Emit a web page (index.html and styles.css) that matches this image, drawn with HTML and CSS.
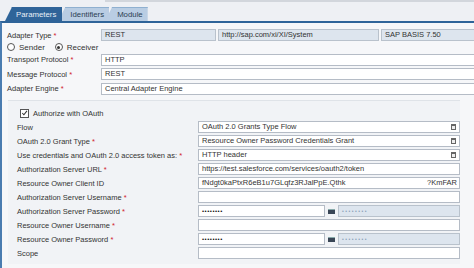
FILE: index.html
```html
<!DOCTYPE html>
<html>
<head>
<meta charset="utf-8">
<link rel="stylesheet" href="styles.css">
</head>
<body>
<div class="top"><div class="top-strip"></div></div>
<div class="tabs">
  <div class="tab active">Parameters</div>
  <div class="tab">Identifiers</div>
  <div class="tab">Module</div>
</div>
<div class="panel">
  <div class="row r1">
    <div class="label">Adapter Type <span class="req">*</span></div>
    <div class="fields3">
      <div class="field ro">REST</div>
      <div class="field ro">http://sap.com/xi/XI/System</div>
      <div class="field ro">SAP BASIS 7.50</div>
    </div>
  </div>
  <div class="radios">
    <span class="radio"></span><span class="rlabel">Sender</span>
    <span class="radio on"></span><span class="rlabel">Receiver</span>
  </div>
  <div class="row">
    <div class="label">Transport Protocol <span class="req">*</span></div>
    <div class="field wide">HTTP</div>
  </div>
  <div class="row">
    <div class="label">Message Protocol <span class="req">*</span></div>
    <div class="field wide">REST</div>
  </div>
  <div class="row">
    <div class="label">Adapter Engine <span class="req">*</span></div>
    <div class="field wide">Central Adapter Engine</div>
  </div>
  <div class="group">
    <div class="check-row"><span class="check"><svg width="8" height="8" viewBox="0 0 8 8"><path d="M1.5 4 L3.3 6 L6.8 1.6" fill="none" stroke="#333" stroke-width="1.2"/></svg></span><span>Authorize with OAuth</span></div>
    <div class="grow"><div class="glabel">Flow</div><div class="field sel">OAuth 2.0 Grants Type Flow<span class="dd"></span></div></div>
    <div class="grow"><div class="glabel">OAuth 2.0 Grant Type <span class="req">*</span></div><div class="field sel">Resource Owner Password Credentials Grant<span class="dd"></span></div></div>
    <div class="grow"><div class="glabel">Use credentials and OAuth 2.0 access token as: <span class="req">*</span></div><div class="field sel">HTTP header<span class="dd"></span></div></div>
    <div class="grow"><div class="glabel">Authorization Server URL <span class="req">*</span></div><div class="field">https://test.salesforce.com/services/oauth2/token</div></div>
    <div class="grow"><div class="glabel">Resource Owner Client ID</div><div class="field split"><span>fNdgt0kaPtxR6eB1u7GLqfz3RJalPpE.Qthk</span><span>?KmFAR</span></div></div>
    <div class="grow"><div class="glabel">Authorization Server Username <span class="req">*</span></div><div class="field"></div></div>
    <div class="grow"><div class="glabel">Authorization Server Password <span class="req">*</span></div>
      <div class="pw"><div class="field dots">••••••••</div><span class="eq"></span><div class="field ro dots2">••••••••</div></div></div>
    <div class="grow"><div class="glabel">Resource Owner Username <span class="req">*</span></div><div class="field"></div></div>
    <div class="grow"><div class="glabel">Resource Owner Password <span class="req">*</span></div>
      <div class="pw"><div class="field dots">••••••••</div><span class="eq"></span><div class="field ro dots2">••••••••</div></div></div>
    <div class="grow"><div class="glabel">Scope</div><div class="field"></div></div>
  </div>
</div>
</body>
</html>
```
FILE: styles.css
```css
* { box-sizing: border-box; }
html, body { margin: 0; padding: 0; }
body {
  width: 474px; height: 268px; overflow: hidden;
  background: #eef0f4;
  font-family: "Liberation Sans", Arial, sans-serif;
  font-size: 7.5px;
  color: #333;
  white-space: nowrap;
}
.top { height: 7px; position: relative; background: #eef0f4; }
.top-strip { margin-left: 105px; height: 2px; background: #d2d6dc; }
.tabs { display: flex; height: 14px; padding-left: 5px; font-size: 7.8px; }
.tab {
  height: 14px; line-height: 13px; padding: 0 5px 0 12px;
  background: #b9cde3; color: #2b3d52;
  clip-path: polygon(7px 0, 100% 0, 100% 100%, 0 100%);
  margin-right: -4px;
  border-top: 1px solid #8fb0d0;
}
.tab.active { background: #2f6499; color: #e8f0f8; padding-left: 11px; padding-right: 6px; z-index: 1; border-top-color: #2f6499; }
.panel {
  border-top: 2px solid #2f6499;
  border-left: 2px solid #4a7cb0;
  background: #f6f7f9;
  height: 247px;
  padding-top: 5px;
}
.row { display: flex; align-items: center; height: 14.5px; }
.label { width: 99px; padding-left: 5px; flex: none; }
.req { color: #d0202a; }
.field {
  height: 12px; line-height: 10px;
  border: 1px solid #b5bcc6; background: #fff;
  padding-left: 3px; white-space: nowrap; overflow: hidden;
  position: relative;
}
.field.ro { background: #dde5ee; border-color: #b9c2cc; }
.fields3 { display: flex; gap: 2px; flex: 1; }
.fields3 .field:nth-child(1) { width: 115px; }
.fields3 .field:nth-child(2) { width: 161px; }
.fields3 .field:nth-child(3) { flex: 1; border-right: none; }
.radios { display: flex; align-items: center; height: 11px; padding-left: 5px; font-size: 8px; margin-top: -1px; }
.radio {
  width: 8px; height: 8px; border-radius: 50%; border: 1px solid #555; background: #fff;
  margin-right: 4px; position: relative;
}
.radio.on::after {
  content: ""; position: absolute; left: 1.5px; top: 1.5px; width: 3px; height: 3px;
  border-radius: 50%; background: #333;
}
.rlabel { margin-right: 10px; }
.field.wide { flex: 1; border-right: none; }
.group {
  margin-top: 4px;
  margin-left: 6px;
  margin-right: 14px;
  background: #f1f3f6;
  border-top: 1px solid #dfe3e8;
  padding-top: 5px;
  height: 164px;
}
.check-row { display: flex; align-items: center; height: 14px; padding-left: 12px; }
.check {
  width: 9px; height: 9px; border: 1px solid #555; background: #fff; margin-right: 4px;
  display: flex; align-items: center; justify-content: center;
}
.grow { display: flex; align-items: center; height: 14px; }
.glabel { width: 190px; padding-left: 9px; flex: none; }
.grow > .field, .pw { width: 262px; }
.sel .dd {
  position: absolute; right: 3px; top: 2px; width: 5px; height: 6px;
  border: 1px solid #666; border-top-width: 2px; background: #eee;
}
.split { display: flex; justify-content: space-between; padding-right: 2px; }
.pw { display: flex; align-items: center; }
.pw .dots { width: 127px; font-size: 6px; letter-spacing: 0.5px; line-height: 10px; color: #111; }
.eq { width: 7px; height: 5px; background: #3a4656; border-top: 1px solid #8aa; margin: 0 3px 0 3px; flex: none; }
.pw .dots2 { flex: 1; font-size: 5px; color: #8aa0b8; letter-spacing: 1.5px; line-height: 10px; }
```
